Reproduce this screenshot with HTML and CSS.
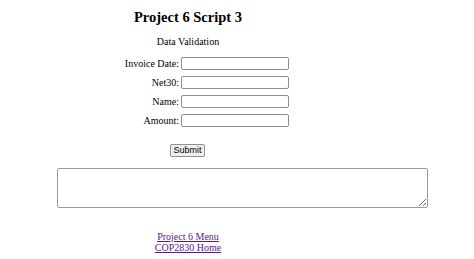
FILE: index.html
```html
<!DOCTYPE html>
<html>
<head>
<meta charset="utf-8">
<link rel="stylesheet" href="styles.css">
</head>
<body>
<div class="col">
  <h1 class="title">Project 6 Script 3</h1>
  <p class="sub">Data Validation</p>
  <form class="form">
    <label class="lbl">Invoice Date:</label><input class="inp" type="text">
    <label class="lbl">Net30:</label><input class="inp" type="text">
    <label class="lbl">Name:</label><input class="inp" type="text">
    <label class="lbl">Amount:</label><input class="inp" type="text">
  </form>
  <div class="btnrow"><button class="btn" type="button">Submit</button></div>
</div>
<textarea class="out"></textarea>
<div class="col links">
  <a class="lnk" href="#">Project 6 Menu</a><br>
  <a class="lnk" href="#">COP2830 Home</a>
</div>
</body>
</html>
```
FILE: styles.css
```css
html, body {
  margin: 0;
  padding: 0;
  background: #ffffff;
}
body {
  font-family: "Liberation Serif", "Times New Roman", serif;
  font-size: 10px;
  color: #000;
  width: 474px;
  height: 259px;
  overflow: hidden;
}
.col {
  width: 376px;
  text-align: center;
}
.title {
  margin: 0;
  padding-top: 9px;
  font-size: 14.5px;
  line-height: 17px;
  font-weight: bold;
}
.sub {
  margin: 10px 0 0;
  line-height: 12px;
}
.form {
  margin-top: 9px;
  display: grid;
  grid-template-columns: 179px 108px;
  column-gap: 2px;
  row-gap: 6px;
  align-items: center;
}
.lbl {
  text-align: right;
  line-height: 13px;
}
.inp {
  box-sizing: border-box;
  width: 108px;
  height: 13px;
  margin: 0;
  padding: 0 2px;
  border: 1px solid #8f8f8f;
  border-radius: 2px;
  background: #fff;
  font-size: 9px;
}
.btnrow {
  margin-top: 17px;
  height: 13px;
}
.btn {
  box-sizing: border-box;
  height: 13px;
  width: 35px;
  margin: 0 0 0 -1px;
  padding: 0;
  font-family: "Liberation Sans", Arial, sans-serif;
  font-size: 9px;
  line-height: 11px;
  color: #000;
  background: #efefef;
  border: 1px solid #8f8f8f;
  border-radius: 2px;
}
.out {
  display: block;
  box-sizing: border-box;
  margin: 11px 0 0 57px;
  width: 371px;
  height: 40px;
  padding: 2px;
  border: 1px solid #9a9a9a;
  border-radius: 2px;
  resize: both;
}
.links {
  margin-top: 23px;
  line-height: 11px;
}
.lnk {
  color: #551a8b;
  text-decoration: underline;
}
```
